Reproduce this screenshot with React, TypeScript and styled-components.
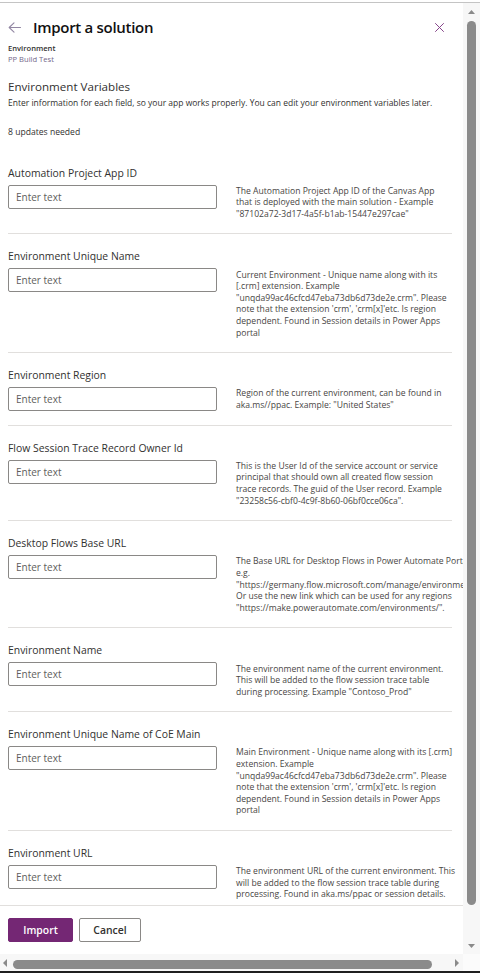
import React from "react";
import styled, { createGlobalStyle } from "styled-components";

const GlobalStyle = createGlobalStyle`
  html, body { margin: 0; padding: 0; background: #fff; overflow: hidden; }
  body { font-family: "Open Sans", "Noto Sans", sans-serif; color: #323130; }
  * { box-sizing: border-box; }
`;

const Frame = styled.div`
  margin-top: 2px;
  border-top: 1px solid #c4c4c4;
  border-bottom: 2px solid #1f1f1f;
  display: grid;
  grid-template-columns: 463px 17px;
  grid-template-rows: 951px 17px;
`;

const Viewport = styled.div`
  display: flex;
  flex-direction: column;
  overflow: hidden;
  background: #fff;
`;

const VScroll = styled.div`
  display: flex;
  flex-direction: column;
  background: #f7f7f7;
`;

const HScroll = styled.div`
  display: flex;
  align-items: flex-start;
  background: #f7f7f7;
`;

const Corner = styled.div`
  background: #fbfbfb;
`;

const ArrowBox = styled.div<{ $w: number; $h: number }>`
  flex: none;
  display: flex;
  align-items: center;
  justify-content: center;
  width: ${(p) => p.$w}px;
  height: ${(p) => p.$h}px;
`;

const VTrack = styled.div`
  flex: 1;
  padding: 1px 4px 0;
`;

const VThumb = styled.div`
  width: 9px;
  height: 884px;
  border-radius: 5px;
  background: #8b8b8b;
`;

const HTrack = styled.div`
  flex: 1;
  padding: 6px 0 0 3px;
`;

const HThumb = styled.div`
  width: 419px;
  height: 9px;
  border-radius: 5px;
  background: #8b8b8b;
`;

const Header = styled.header`
  flex: none;
  display: flex;
  align-items: center;
  height: 24px;
  margin-top: 12px;
  padding: 0 19px 0 8px;
`;

const IconButton = styled.button`
  display: flex;
  align-items: center;
  justify-content: center;
  padding: 0;
  border: none;
  background: none;
  cursor: pointer;
`;

const Title = styled.h1`
  flex: 1;
  margin: 0 0 0 12px;
  font-size: 15px;
  font-weight: 600;
  letter-spacing: -0.3px;
  line-height: 24px;
  color: #111;
`;

const EnvBlock = styled.div`
  flex: none;
  margin-top: 3.5px;
  padding: 0 8px;
`;

const EnvLabel = styled.div`
  font-size: 7.6px;
  font-weight: 600;
  line-height: 11px;
  color: #323130;
`;

const EnvValue = styled.div`
  font-size: 7.6px;
  line-height: 11px;
  color: #74688a;
`;

const Body = styled.div`
  flex: 1;
  min-height: 0;
  overflow: hidden;
  padding: 0 11px 0 8px;
`;

const SectionTitle = styled.h2`
  margin: 13.5px 0 0;
  font-size: 11.6px;
  font-weight: 400;
  line-height: 18px;
  color: #323130;
`;

const Intro = styled.p`
  margin: 0;
  font-size: 8.5px;
  line-height: 13px;
  color: #323130;
  white-space: nowrap;
`;

const Count = styled.p`
  margin: 17px 0 0;
  font-size: 8.6px;
  line-height: 13px;
  color: #323130;
`;

const Fields = styled.div`
  margin-top: 26.5px;
`;

const Field = styled.section`
  padding: 15px 0 13px;
  border-bottom: 1px solid #e1dfdd;
  &:first-child { padding-top: 0; }
  &:last-child { border-bottom: none; }
`;

const Label = styled.label`
  display: block;
  font-size: 10.4px;
  line-height: 14px;
  margin-bottom: 5px;
  color: #323130;
`;

const Row = styled.div`
  display: grid;
  grid-template-columns: 209px 1fr;
  column-gap: 19px;
  align-items: start;
`;

const TextInput = styled.input`
  width: 209px;
  height: 24px;
  margin: 0;
  padding: 0 7px;
  border: 1px solid #8a8886;
  border-radius: 2px;
  font-family: inherit;
  font-size: 10px;
  color: #323130;
  background: #fff;
  outline: none;
  &::placeholder { color: #605e5c; }
`;

const Description = styled.div`
  padding-top: 1.2px;
  font-size: 8.6px;
  line-height: 11.6px;
  color: #484644;
  white-space: nowrap;
`;

const Footer = styled.footer`
  flex: none;
  display: flex;
  gap: 6px;
  padding: 12px 8px;
  background: #fff;
  border-top: 1px solid #e1dfdd;
`;

const Button = styled.button<{ $primary?: boolean; $w: number }>`
  width: ${(p) => p.$w}px;
  height: 24px;
  padding: 0;
  border-radius: 2px;
  border: 1px solid ${(p) => (p.$primary ? "#742774" : "#8a8886")};
  background: ${(p) => (p.$primary ? "#742774" : "#fff")};
  color: ${(p) => (p.$primary ? "#fff" : "#323130")};
  font-family: inherit;
  font-size: 10.4px;
  font-weight: 600;
  cursor: pointer;
`;

const fields: { label: string; lines: string[] }[] = [
  {
    label: "Automation Project App ID",
    lines: [
      "The Automation Project App ID of the Canvas App",
      "that is deployed with the main solution - Example",
      '"87102a72-3d17-4a5f-b1ab-15447e297cae"',
    ],
  },
  {
    label: "Environment Unique Name",
    lines: [
      "Current Environment - Unique name along with its",
      "[.crm] extension. Example",
      '"unqda99ac46cfcd47eba73db6d73de2e.crm". Please',
      "note that the extension 'crm', 'crm[x]'etc. Is region",
      "dependent. Found in Session details in Power Apps",
      "portal",
    ],
  },
  {
    label: "Environment Region",
    lines: ["Region of the current environment, can be found in", 'aka.ms//ppac. Example: "United States"'],
  },
  {
    label: "Flow Session Trace Record Owner Id",
    lines: [
      "This is the User Id of the service account or service",
      "principal that should own all created flow session",
      "trace records. The guid of the User record. Example",
      '"23258c56-cbf0-4c9f-8b60-06bf0cce06ca".',
    ],
  },
  {
    label: "Desktop Flows Base URL",
    lines: [
      "The Base URL for Desktop Flows in Power Automate Portal",
      "e.g.",
      '"https://germany.flow.microsoft.com/manage/environments/"',
      "Or use the new link which can be used for any regions",
      '"https://make.powerautomate.com/environments/".',
    ],
  },
  {
    label: "Environment Name",
    lines: [
      "The environment name of the current environment.",
      "This will be added to the flow session trace table",
      'during processing. Example "Contoso_Prod"',
    ],
  },
  {
    label: "Environment Unique Name of CoE Main",
    lines: [
      "Main Environment - Unique name along with its [.crm]",
      "extension. Example",
      '"unqda99ac46cfcd47eba73db6d73de2e.crm". Please',
      "note that the extension 'crm', 'crm[x]'etc. Is region",
      "dependent. Found in Session details in Power Apps",
      "portal",
    ],
  },
  {
    label: "Environment URL",
    lines: [
      "The environment URL of the current environment. This",
      "will be added to the flow session trace table during",
      "processing. Found in aka.ms/ppac or session details.",
    ],
  },
];

const BackIcon = () => (
  <svg width="13" height="11" viewBox="0 0 13 11" fill="none">
    <path d="M6 0.8 L1.2 5.5 L6 10.2 M1.2 5.5 H12.5" stroke="#9287a3" strokeWidth="1.1" strokeLinecap="round" strokeLinejoin="round" />
  </svg>
);

const CloseIcon = () => (
  <svg width="9" height="9" viewBox="0 0 9 9" fill="none">
    <path d="M0.5 0.5 L8.5 8.5 M8.5 0.5 L0.5 8.5" stroke="#86458a" strokeWidth="1" strokeLinecap="round" />
  </svg>
);

const Tri = ({ points, w, h }: { points: string; w: number; h: number }) => (
  <svg width={w} height={h} viewBox={`0 0 ${w} ${h}`}>
    <polygon points={points} fill="#8a8a8a" />
  </svg>
);

export default function App() {
  return (
    <>
      <GlobalStyle />
      <Frame>
        <Viewport>
          <Header>
            <IconButton aria-label="Back">
              <BackIcon />
            </IconButton>
            <Title>Import a solution</Title>
            <IconButton aria-label="Close">
              <CloseIcon />
            </IconButton>
          </Header>
          <EnvBlock>
            <EnvLabel>Environment</EnvLabel>
            <EnvValue>PP Build Test</EnvValue>
          </EnvBlock>
          <Body>
            <SectionTitle>Environment Variables</SectionTitle>
            <Intro>
              Enter information for each field, so your app works properly. You can edit your environment variables later.
            </Intro>
            <Count>8 updates needed</Count>
            <Fields>
              {fields.map((f) => (
                <Field key={f.label}>
                  <Label>{f.label}</Label>
                  <Row>
                    <TextInput placeholder="Enter text" aria-label={f.label} />
                    <Description>
                      {f.lines.map((line, i) => (
                        <React.Fragment key={i}>
                          {i > 0 && <br />}
                          {line}
                        </React.Fragment>
                      ))}
                    </Description>
                  </Row>
                </Field>
              ))}
            </Fields>
          </Body>
          <Footer>
            <Button $primary $w={65}>Import</Button>
            <Button $w={62}>Cancel</Button>
          </Footer>
        </Viewport>
        <VScroll>
          <ArrowBox $w={17} $h={17}>
            <Tri points="0,4 3.5,0 7,4" w={7} h={4} />
          </ArrowBox>
          <VTrack>
            <VThumb />
          </VTrack>
          <ArrowBox $w={17} $h={17}>
            <Tri points="0,0 7,0 3.5,4" w={7} h={4} />
          </ArrowBox>
        </VScroll>
        <HScroll>
          <ArrowBox $w={10} $h={17}>
            <Tri points="4,0 4,8 0,4" w={4} h={8} />
          </ArrowBox>
          <HTrack>
            <HThumb />
          </HTrack>
          <ArrowBox $w={12} $h={17}>
            <Tri points="0,0 4,4 0,8" w={4} h={8} />
          </ArrowBox>
        </HScroll>
        <Corner />
      </Frame>
    </>
  );
}
